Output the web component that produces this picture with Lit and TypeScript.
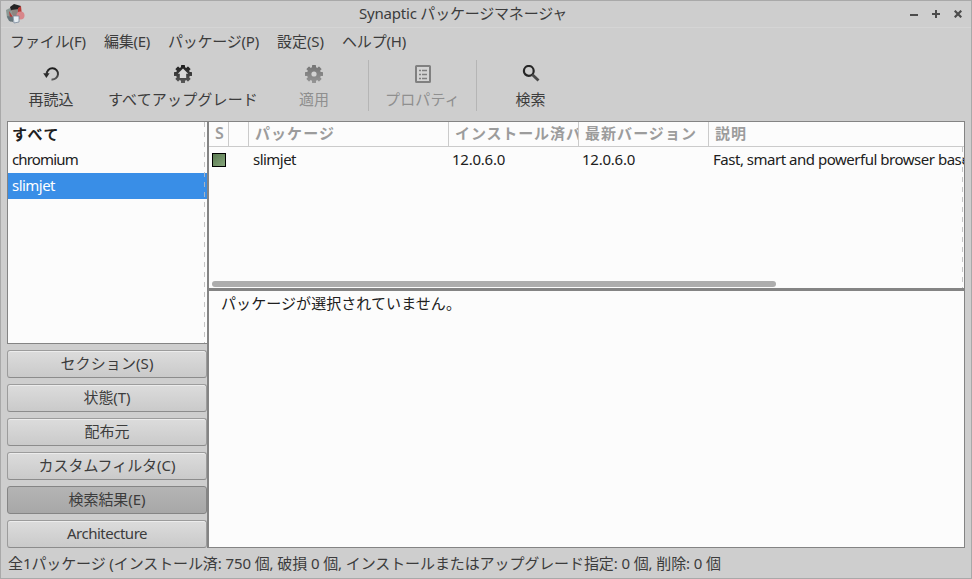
import { LitElement, html, css, svg } from "lit";
import { customElement, property } from "lit/decorators.js";

/** Single-line label whose tracking is adjusted so it occupies a given width. */
@customElement("fit-label")
class FitLabel extends LitElement {
  @property() text = "";
  @property({ type: Number }) w = 0;
  static styles = css`
    :host { display: inline-block; white-space: pre; flex: none; }
  `;
  render() {
    return html`<span>${this.text}</span>`;
  }
  updated() {
    const span = this.renderRoot.querySelector("span") as HTMLElement;
    span.style.letterSpacing = "0";
    const natural = span.getBoundingClientRect().width;
    span.style.letterSpacing = `${(this.w - natural) / [...this.text].length}px`;
  }
}

const t = (text: string, w: number) => html`<fit-label .text=${text} .w=${w}></fit-label>`;

const gearTeeth = [0, 45, 90, 135, 180, 225, 270, 315].map(
  (a) => svg`<rect x="7" y="0" width="4" height="4" rx=".6" transform="rotate(${a} 9 9)"/>`
);

const icons = {
  reload: html`<svg width="18" height="18" viewBox="0 0 18 18">
    <defs><linearGradient id="r" x1="0" y1="0" x2="0" y2="1"><stop stop-color="#1c1c1c"/><stop offset="1" stop-color="#5a5a5a"/></linearGradient></defs>
    <path d="M4.800 9.200A5.600 5.600 0 1 1 9.500 14.400" fill="none" stroke="url(#r)" stroke-width="2"/>
    <path d="M1.200 8.300h6.400L4.400 12.900z" fill="#2c2c2c"/>
  </svg>`,
  upgrade: html`<svg width="18" height="18" viewBox="0 0 18 18">
    <defs><linearGradient id="u" gradientUnits="userSpaceOnUse" x1="0" y1="0" x2="0" y2="18"><stop stop-color="#1c1c1c"/><stop offset="1" stop-color="#5a5a5a"/></linearGradient></defs>
    <mask id="um"><g fill="#fff">${gearTeeth}<circle cx="9" cy="9" r="7"/></g></mask>
    <rect width="18" height="18" fill="url(#u)" mask="url(#um)"/>
    <path d="M9 3.500l5.200 5.300h-2v4.200H5.800V8.800h-2z" fill="#d8d8d8"/>
  </svg>`,
  apply: html`<svg width="18" height="18" viewBox="0 0 18 18">
    <defs><linearGradient id="a" gradientUnits="userSpaceOnUse" x1="0" y1="0" x2="0" y2="18"><stop stop-color="#747474"/><stop offset="1" stop-color="#959595"/></linearGradient></defs>
    <mask id="am"><g fill="#fff">${gearTeeth}<circle cx="9" cy="9" r="7"/></g></mask>
    <rect width="18" height="18" fill="url(#a)" mask="url(#am)"/>
    <circle cx="9" cy="9" r="2.600" fill="#d2d2d2"/>
  </svg>`,
  props: html`<svg width="18" height="18" viewBox="0 0 18 18">
    <rect x="2" y="1" width="14" height="16" rx=".5" fill="#d4d4d4" stroke="#808080" stroke-width="2"/>
    <path d="M5 5.500h2M8 5.500h5M5 9.500h2M8 9.500h5M5 13.500h2M8 13.500h5" stroke="#808080" stroke-width="1.500"/>
  </svg>`,
  search: html`<svg width="18" height="18" viewBox="0 0 18 18">
    <circle cx="6.800" cy="5.900" r="4.900" fill="none" stroke="#262626" stroke-width="2.200"/>
    <path d="M10.200 9.500L16.500 15.600" stroke="#4a4a4a" stroke-width="2.800"/>
  </svg>`,
};

@customElement("app-root")
class AppRoot extends LitElement {
  static styles = css`
    * { box-sizing: border-box; }
    :host {
      display: flex; flex-direction: column; width: 972px; height: 579px; overflow: hidden;
      box-sizing: border-box; border: 1px solid #a9a9a9; background: #cecece; color: #3c3c3c;
      font: 15px/20px "Noto Sans", "Noto Sans CJK JP", sans-serif; cursor: default;
    }
    svg { display: block; flex: none; }
    .title { height: 27px; flex: none; display: grid; grid-template-columns: 354px 1fr 353px; align-items: center;
      border-bottom: 1px solid #d5d5d5; }
    .logo { margin-left: 4px; }
    .caption { padding: 0 0 2px 4px; }
    .controls { display: flex; justify-content: flex-end; gap: 14px; padding-right: 9px; }
    .menu { height: 27px; flex: none; display: flex; align-items: center; gap: 18px; padding: 0 0 2px 9px; }
    .tools { height: 66px; flex: none; display: grid; padding-left: 19px;
      grid-template-columns: 62px 202px 60px 24px 1px 107px 1px 107px; }
    .tool { display: flex; flex-direction: column; align-items: center; padding-top: 10px; gap: 6px; }
    .off { color: #8f8f8f; }
    .sep { background: #b5b5b5; margin: 5px 0 10px; height: 51px; }
    .main { flex: none; height: 427px; display: grid; grid-template-columns: 200px 758px; margin-left: 6px; }
    .side { display: flex; flex-direction: column; gap: 6px; }
    .list { height: 223px; flex: none; background: #fcfcfc; border: 1px solid #848484; border-right: 0; color: #202020; position: relative; }
    .row { height: 26px; display: flex; align-items: center; padding: 0 0 2px 4px; }
    .first { height: 25px; font-weight: 700; }
    .sel { background: #398ee7; color: #fff; }
    .dash { position: absolute; top: 0; bottom: 0; right: 2px; width: 1px;
      background: repeating-linear-gradient(#bcbcbc 0 5px, transparent 5px 10px); opacity: .85; }
    .btn { height: 28px; flex: none; display: flex; align-items: center; justify-content: center; padding-bottom: 2px;
      border: 1px solid #9c9c9c; border-bottom-color: #8c8c8c; border-radius: 3px;
      background: linear-gradient(#dcdcdc, #cacaca); box-shadow: inset 0 1px #ececec; }
    .on { background: linear-gradient(#b4b4b4, #a7a7a7); box-shadow: none; border-color: #858585; }
    .right { display: flex; flex-direction: column; background: #fcfcfc; border: 1px solid #848484;
      border-left-width: 2px; color: #202020; overflow: hidden; }
    .table { height: 166px; flex: none; position: relative; overflow: hidden; }
    .cols { display: grid; grid-template-columns: 20px 20px 200px 130px 130px 1fr; width: 755px; }
    .head { height: 25px; border-bottom: 1px solid #cbcbcb; font-weight: 700; color: #9c9c9c; }
    .th { border-right: 1px solid #cbcbcb; padding: 0 0 2px 6px; overflow: hidden; display: flex; align-items: center; white-space: nowrap; }
    .th:first-child { font-size: 16px; font-weight: 600; }
    .th:last-child { border-right: 0; }
    .body { height: 26px; }
    .td { display: flex; align-items: center; padding: 0 0 2px 4px; overflow: hidden; white-space: nowrap; }
    .td.ver { padding-left: 3px; }
    .td.tight { padding: 0 0 0 3px; }
    .mark { width: 14px; height: 14px; border: 1px solid #000; background: linear-gradient(135deg, #59794f, #86a67c); flex: none; }
    .scroll { position: absolute; left: 3px; bottom: 1px; width: 564px; height: 6px; border-radius: 3px; background: #adadad; }
    .table .dash { top: 25px; right: 1px; }
    .detail { flex: 1; border-top: 3px solid #848484; padding: 2px 0 0 12px; }
    .status { flex: 1; padding: 5px 0 0 7px; }
  `;

  render() {
    const menus: [string, number][] = [["ファイル(F)", 76], ["編集(E)", 46], ["パッケージ(P)", 91], ["設定(S)", 47], ["ヘルプ(H)", 64]];
    const filters: [string, number, boolean?][] = [["セクション(S)", 93], ["状態(T)", 47], ["配布元", 45], ["カスタムフィルタ(C)", 137], ["検索結果(E)", 77, true], ["Architecture", 80]];
    const tool = (icon: unknown, label: string, w: number, off = false) =>
      html`<div class="tool ${off ? "off" : ""}">${icon}${t(label, w)}</div>`;
    return html`
      <div class="title">
        <svg class="logo" width="21" height="20" viewBox="0 0 21 20">
          <path d="M1 6l4-2 2 5-1 9-4-4z" fill="#8b9894"/>
          <path d="M5 3l4-3 7 2-2 4-8 1z" fill="#242424"/>
          <path d="M6 6l8-1 1 7-7 2z" fill="#8d8580"/>
          <path d="M13 4l3-2 1 10-4 1zM4 7l4 6-3 1z" fill="#b63c38"/>
          <circle cx="15.500" cy="11.500" r="4" fill="#d8868a"/>
          <path d="M2 12l6 1v5l-4-1z" fill="#66757b"/>
          <path d="M8 12h6v6l-5 1z" fill="#e6edf2" stroke="#78899a" stroke-width=".8"/>
        </svg>
        <div class="caption">${t("Synaptic パッケージマネージャ", 208)}</div>
        <div class="controls">
          <svg width="8" height="8"><path d="M0 4h8v2H0z" fill="#4c4c4c"/></svg>
          <svg width="8" height="8"><path d="M3 0h2v3h3v2H5v3H3V5H0V3h3z" fill="#4c4c4c"/></svg>
          <svg width="8" height="8"><path d="M.7.7l6.600 6.600M7.300.7L.7 7.300" stroke="#4c4c4c" stroke-width="2.200"/></svg>
        </div>
      </div>
      <div class="menu">${menus.map(([s, w]) => t(s, w))}</div>
      <div class="tools">
        ${tool(icons.reload, "再読込", 45)}
        ${tool(icons.upgrade, "すべてアップグレード", 150)}
        ${tool(icons.apply, "適用", 30, true)}
        <div></div><div class="sep"></div>
        ${tool(icons.props, "プロパティ", 75, true)}
        <div class="sep"></div>
        ${tool(icons.search, "検索", 30)}
      </div>
      <div class="main">
        <div class="side">
          <div class="list">
            <div class="row first">${t("すべて", 48)}</div>
            <div class="row">${t("chromium", 66)}</div>
            <div class="row sel">${t("slimjet", 43)}</div>
            <div class="dash"></div>
          </div>
          ${filters.map(([s, w, on]) => html`<div class="btn ${on ? "on" : ""}">${t(s, w)}</div>`)}
        </div>
        <div class="right">
          <div class="table">
            <div class="cols head">
              <div class="th">${t("S", 10)}</div><div class="th"></div>
              <div class="th">${t("パッケージ", 80)}</div>
              <div class="th">${t("インストール済バージョン", 190)}</div>
              <div class="th">${t("最新バージョン", 112)}</div>
              <div class="th">${t("説明", 32)}</div>
            </div>
            <div class="cols body">
              <div class="td tight"><div class="mark"></div></div><div class="td"></div>
              <div class="td">${t("slimjet", 43)}</div>
              <div class="td ver">${t("12.0.6.0", 53)}</div>
              <div class="td ver">${t("12.0.6.0", 53)}</div>
              <div class="td">${t("Fast, smart and powerful browser based", 265)}</div>
            </div>
            <div class="scroll"></div>
            <div class="dash"></div>
          </div>
          <div class="detail">${t("パッケージが選択されていません。", 240)}</div>
        </div>
      </div>
      <div class="status">${t("全1パッケージ (インストール済: 750 個, 破損 0 個, インストールまたはアップグレード指定: 0 個, 削除: 0 個", 713)}</div>
    `;
  }
}
